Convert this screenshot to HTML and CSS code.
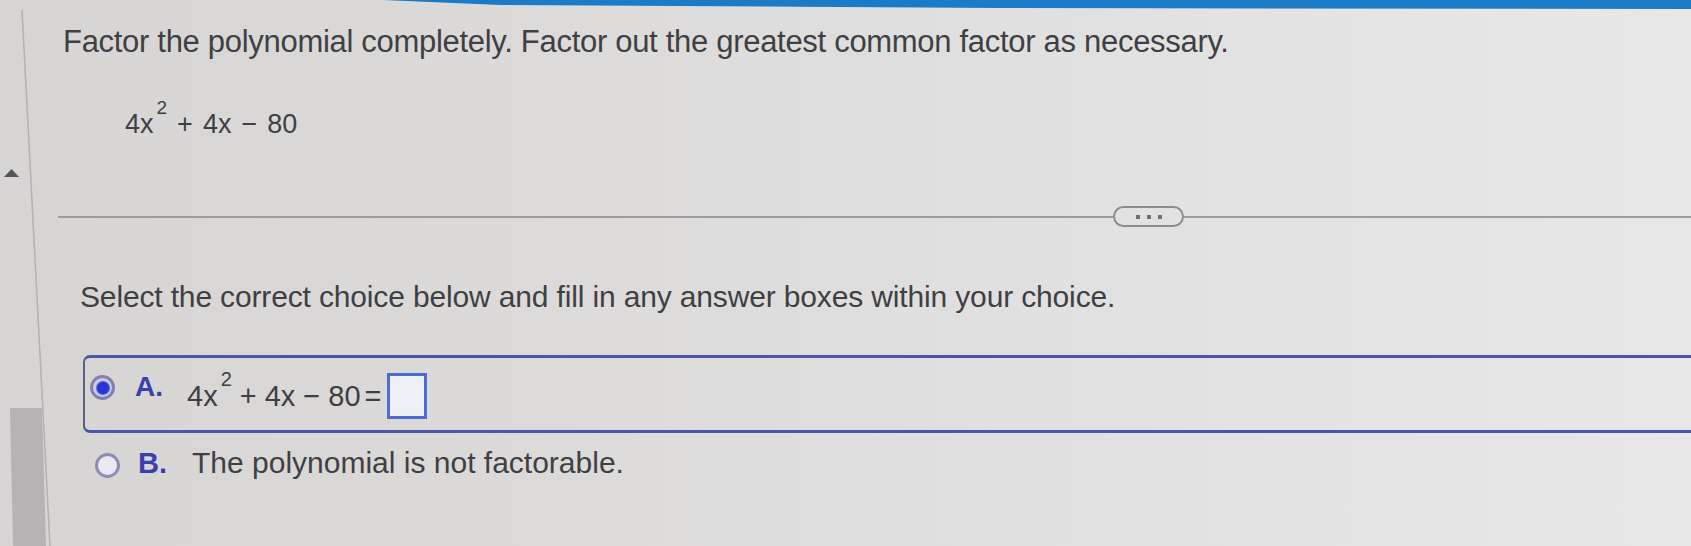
FILE: index.html
```html
<!DOCTYPE html>
<html lang="en">
<head>
<meta charset="utf-8">
<title>Factor the polynomial</title>
<link rel="stylesheet" href="styles.css">
</head>
<body>
<div class="topbar"></div>
<div class="page">
  <aside class="sidebar">
    <svg class="sidebar-art" width="56" height="536" viewBox="0 0 56 536">
      <polygon points="10,398 42,398 46,536 13,536" fill="#b6b3b4"/>
      <line x1="22" y1="0" x2="50" y2="536" stroke="#b3b1b1" stroke-width="1.5"/>
      <polygon points="4,167 19,167 11.5,159" fill="#55565c"/>
    </svg>
  </aside>
  <main class="main">
    <p class="title">Factor the polynomial completely. Factor out the greatest common factor as necessary.</p>
    <p class="expr poly">4x<span class="sup">2</span><span class="op">+</span>4x<span class="op">−</span>80</p>
    <div class="divider">
      <span class="rule rule-left"></span>
      <span class="pill"><i></i><i></i><i></i></span>
      <span class="rule rule-right"></span>
    </div>
    <p class="prompt">Select the correct choice below and fill in any answer boxes within your choice.</p>
    <div class="choice choice-a">
      <span class="radio radio-on"><span class="dot"></span></span>
      <span class="letter letter-a">A.</span>
      <span class="expr eq">4x<span class="sup">2</span><span class="op">+</span>4x<span class="op">−</span>80<span class="eqs">=</span></span>
      <span class="answer-box"></span>
    </div>
    <div class="choice choice-b">
      <span class="radio"></span>
      <span class="letter letter-b">B.</span>
      <span class="choice-text">The polynomial is not factorable.</span>
    </div>
  </main>
</div>
</body>
</html>
```

FILE: styles.css
```css
html, body {
  margin: 0;
  padding: 0;
}
body {
  width: 1691px;
  height: 546px;
  overflow: hidden;
  font-family: "Liberation Sans", Arial, sans-serif;
  color: #3f3f44;
  background: linear-gradient(90deg, #d7d5d4 0%, #dcdbda 35%, #e3e2e3 70%, #e9e8e9 100%);
}
.topbar {
  height: 10px;
  background: #1b7bc6;
  clip-path: polygon(383px 0, 100% 0, 100% 9px, 1000px 8px, 500px 5px);
}
.page {
  display: flex;
  height: 536px;
}
.sidebar {
  width: 56px;
  flex: none;
}
.sidebar-art {
  display: block;
}
.main {
  flex: 1;
  display: flex;
  flex-direction: column;
  min-width: 0;
}
p {
  margin: 0;
}
.title {
  margin: 14px 0 0 7px;
  font-size: 31px;
  line-height: 36px;
  letter-spacing: -0.3px;
  white-space: nowrap;
}
.expr {
  white-space: nowrap;
}
.poly {
  margin: 47px 0 0 69px;
  font-size: 27px;
  line-height: 34px;
}
.sup {
  font-size: 19px;
  line-height: 0;
  vertical-align: 19px;
  margin-left: 3px;
}
.poly .op {
  margin: 0 10px;
}
.eq {
  margin: 21px 0 0 24px;
  font-size: 29px;
  line-height: 34px;
}
.eq .sup {
  font-size: 20px;
  vertical-align: 20px;
}
.eq .op {
  margin: 0 8px;
}
.eqs {
  margin-left: 4px;
}
.divider {
  margin: 65px 0 0 2px;
  height: 21px;
  display: flex;
  align-items: center;
}
.rule {
  height: 2px;
  background: #9d9b9b;
}
.rule-left {
  width: 1055px;
  flex: none;
}
.rule-right {
  flex: 1;
}
.pill {
  flex: none;
  box-sizing: border-box;
  width: 71px;
  height: 21px;
  border: 2px solid #8d8b8b;
  border-radius: 11px;
  display: flex;
  align-items: center;
  justify-content: center;
  gap: 7px;
}
.pill i {
  width: 4px;
  height: 4px;
  background: #6f6e72;
}
.prompt {
  margin: 52px 0 0 24px;
  font-size: 30px;
  line-height: 36px;
  letter-spacing: -0.15px;
  white-space: nowrap;
}
.choice {
  display: flex;
  align-items: flex-start;
}
.choice-a {
  box-sizing: border-box;
  margin: 40px -20px 0 27px;
  height: 78px;
  border-top: 3px solid #4b56a6;
  border-bottom: 3px solid #4b56a6;
  border-left: 2px solid #5b5f88;
  border-radius: 7px 0 0 7px;
  padding-left: 5px;
}
.radio {
  flex: none;
  box-sizing: border-box;
  width: 25px;
  height: 25px;
  border-radius: 50%;
  border: 3px solid #8c8cb4;
  background: #e9e9ef;
  display: flex;
  align-items: center;
  justify-content: center;
}
.radio-on {
  margin-top: 17px;
  border-color: #7f80b0;
  background: #c9cbe8;
}
.radio-on .dot {
  width: 12px;
  height: 12px;
  border-radius: 50%;
  background: #2a33d6;
  box-shadow: 0 0 0 1px #5a63e0;
}
.letter {
  font-weight: bold;
  font-size: 28px;
  line-height: 30px;
  color: #3a40ad;
}
.letter-a {
  margin: 14px 0 0 20px;
}
.answer-box {
  flex: none;
  box-sizing: border-box;
  width: 40px;
  height: 46px;
  margin: 15px 0 0 6px;
  border: 3px solid #4e6bd2;
  background: #eef0f5;
}
.choice-b {
  margin: 12px 0 0 39px;
}
.choice-b .radio {
  margin-top: 8px;
}
.letter-b {
  font-size: 29px;
  line-height: 36px;
  margin-left: 18px;
}
.choice-text {
  margin-left: 25px;
  font-size: 30px;
  line-height: 36px;
  white-space: nowrap;
}
```
